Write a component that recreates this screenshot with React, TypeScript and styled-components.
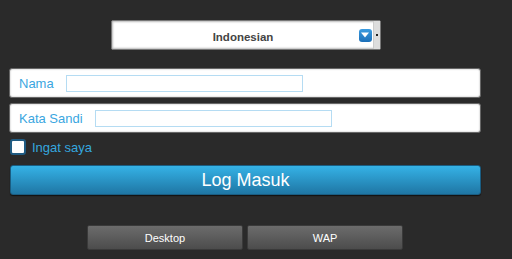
import React from "react";
import styled, { createGlobalStyle } from "styled-components";

const Global = createGlobalStyle`
  html, body { margin: 0; padding: 0; background: #2a2a2a; }
  body { font-family: "Liberation Sans", Arial, sans-serif; }
  * { box-sizing: border-box; }
`;

const Page = styled.div`
  width: 490px;
  padding: 20px 9px 0;
  display: flex;
  flex-direction: column;
`;

const SelectBox = styled.div`
  align-self: center;
  width: 270px;
  height: 30px;
  margin-left: 1px;
  background: #fff;
  border: 1px solid #777;
  border-radius: 2px;
  box-shadow: inset 0 0 2px 1px #bbb;
  display: flex;
  align-items: center;
  position: relative;
`;

const SelectText = styled.span`
  flex: 1;
  text-align: center;
  font-size: 11.5px;
  font-weight: bold;
  color: #444;
  padding-top: 4px;
  padding-left: 16px;
`;

const ArrowBtn = styled.span`
  width: 13px;
  height: 13px;
  border-radius: 3px;
  background: linear-gradient(#3a9be0, #1c6fb8);
  display: flex;
  align-items: center;
  justify-content: center;
  margin-right: 1px;
`;

const Strip = styled.span`
  align-self: stretch;
  width: 7px;
  background: #ddd;
  border-left: 1px solid #ccc;
  display: flex;
  align-items: center;
  justify-content: center;
`;

const Dot = styled.span`
  width: 2px;
  height: 2px;
  background: #222;
`;

const Form = styled.div`
  margin-top: 18px;
  display: flex;
  flex-direction: column;
  gap: 5px;
`;

const Row = styled.label`
  height: 30px;
  background: #fff;
  border: 1px solid #666;
  border-radius: 3px;
  box-shadow: inset 0 0 2px #aaa;
  display: flex;
  align-items: center;
  padding-left: 9px;
  gap: 12px;
`;

const Label = styled.span`
  font-size: 13px;
  color: #3aa6df;
`;

const Input = styled.input`
  width: 237px;
  height: 17px;
  border: 1px solid #b5dcf3;
  outline: none;
  padding: 0;
  margin: 0;
  background: #fff;
`;

const RememberRow = styled.label`
  margin-top: 6px;
  height: 16px;
  display: flex;
  align-items: center;
  gap: 6px;
  padding-left: 1px;
`;

const Check = styled.span`
  width: 16px;
  height: 16px;
  border: 2px solid #1f5b82;
  border-radius: 3px;
  background: #fff;
`;

const Remember = styled.span`
  font-size: 13px;
  color: #35a7df;
`;

const Submit = styled.button`
  margin-top: 10px;
  margin-left: 1px;
  height: 30px;
  border: 1px solid #1a5d82;
  border-radius: 3px;
  background: linear-gradient(#35b2e6, #1f76a4);
  color: #fff;
  font-family: "Liberation Sans", Arial, sans-serif;
  font-size: 18px;
  padding: 0;
  box-shadow: 0 1px 1px #111;
`;

const Footer = styled.div`
  margin-top: 30px;
  display: flex;
  justify-content: center;
  gap: 4px;
`;

const ModeBtn = styled.button`
  width: 156px;
  height: 25px;
  border: 1px solid #3a3a3a;
  border-radius: 2px;
  background: linear-gradient(#6c6c6c, #4c4c4c);
  color: #fff;
  font-family: "Liberation Sans", Arial, sans-serif;
  font-size: 11px;
  padding: 0;
`;

export default function App() {
  return (
    <>
      <Global />
      <Page>
        <SelectBox>
          <SelectText>Indonesian</SelectText>
          <ArrowBtn>
            <svg width="8" height="6" viewBox="0 0 8 6">
              <path d="M0 0.5 H8 L4 5.5 Z" fill="#fff" />
            </svg>
          </ArrowBtn>
          <Strip>
            <Dot />
          </Strip>
        </SelectBox>
        <Form>
          <Row>
            <Label>Nama</Label>
            <Input type="text" />
          </Row>
          <Row>
            <Label>Kata Sandi</Label>
            <Input type="password" />
          </Row>
        </Form>
        <RememberRow>
          <Check />
          <Remember>Ingat saya</Remember>
        </RememberRow>
        <Submit>Log Masuk</Submit>
        <Footer>
          <ModeBtn>Desktop</ModeBtn>
          <ModeBtn>WAP</ModeBtn>
        </Footer>
      </Page>
    </>
  );
}
